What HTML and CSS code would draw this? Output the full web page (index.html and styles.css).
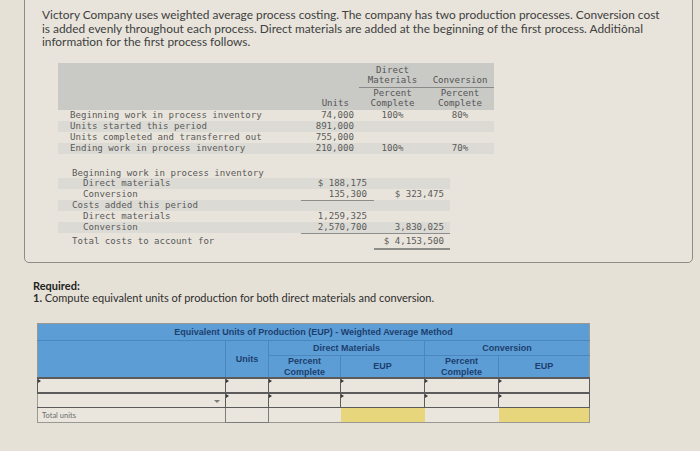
FILE: index.html
```html
<!DOCTYPE html>
<html>
<head>
<meta charset="utf-8">
<link rel="stylesheet" href="styles.css">
</head>
<body>
<div class="panel">
  <p class="intro">Victory Company uses weighted average process costing. The company has two production processes. Conversion cost<br>is added evenly throughout each process. Direct materials are added at the beginning of the first process. Additiônal<br>information for the first process follows.</p>

  <table class="mono units">
    <colgroup><col class="c-label"><col class="c-units"><col class="c-dm"><col class="c-cv"></colgroup>
    <thead>
      <tr class="h1"><th></th><th></th><th class="rule">Direct<br>Materials</th><th class="rule bottom">Conversion</th></tr>
      <tr class="h2"><th></th><th class="right">Units</th><th>Percent<br>Complete</th><th>Percent<br>Complete</th></tr>
    </thead>
    <tbody>
      <tr><td class="label">Beginning work in process inventory</td><td class="right">74,000</td><td class="center">100%</td><td class="center">80%</td></tr>
      <tr class="shade"><td class="label">Units started this period</td><td class="right">891,000</td><td></td><td></td></tr>
      <tr><td class="label">Units completed and transferred out</td><td class="right">755,000</td><td></td><td></td></tr>
      <tr class="shade"><td class="label">Ending work in process inventory</td><td class="right">210,000</td><td class="center">100%</td><td class="center">70%</td></tr>
    </tbody>
  </table>

  <table class="mono costs">
    <colgroup><col class="k-label"><col class="k-a"><col class="k-b"></colgroup>
    <tbody>
      <tr><td class="l1">Beginning work in process inventory</td><td></td><td></td></tr>
      <tr class="shade"><td class="l2">Direct materials</td><td class="va">$ 188,175</td><td></td></tr>
      <tr><td class="l2">Conversion</td><td class="va under">135,300</td><td class="vb">$ 323,475</td></tr>
      <tr class="shade"><td class="l1">Costs added this period</td><td></td><td></td></tr>
      <tr><td class="l2">Direct materials</td><td class="va">1,259,325</td><td></td></tr>
      <tr class="shade"><td class="l2">Conversion</td><td class="va under">2,570,700</td><td class="vb under">3,830,025</td></tr>
      <tr class="total"><td class="l1">Total costs to account for</td><td></td><td class="vb under2">$ 4,153,500</td></tr>
    </tbody>
  </table>
</div>

<div class="required">
  <p class="req-title">Required:</p>
  <p class="req-text"><b>1.</b> Compute equivalent units of production for both direct materials and conversion.</p>
</div>

<table class="eup">
  <colgroup><col class="e1"><col class="e2"><col class="e3"><col class="e4"><col class="e5"><col class="e6"></colgroup>
  <thead>
    <tr class="t-title"><th colspan="6">Equivalent Units of Production (EUP) - Weighted Average Method</th></tr>
    <tr class="t-group"><th rowspan="2"></th><th rowspan="2" class="vline">Units</th><th colspan="2" class="vline">Direct Materials</th><th colspan="2" class="vline">Conversion</th></tr>
    <tr class="t-sub"><th class="vline">Percent<br>Complete</th><th class="vline">EUP</th><th class="vline">Percent<br>Complete</th><th class="vline">EUP</th></tr>
  </thead>
  <tbody>
    <tr class="inrow"><td class="in mark"></td><td class="in mark"></td><td class="in mark"></td><td class="in mark"></td><td class="in mark"></td><td class="in mark"></td></tr>
    <tr class="inrow"><td class="in select"><span class="caret"></span></td><td class="in mark"></td><td class="in mark"></td><td class="in mark"></td><td class="in mark"></td><td class="in mark"></td></tr>
    <tr class="totrow"><td class="tot-label">Total units</td><td class="boxed"></td><td></td><td class="yellow"></td><td></td><td class="yellow"></td></tr>
  </tbody>
</table>
</body>
</html>
```

FILE: styles.css
```css
html, body {
  margin: 0;
  padding: 0;
}
body {
  background: #e6e1d7;
  width: 700px;
  height: 451px;
  overflow: hidden;
  font-family: Lato, "Liberation Sans", sans-serif;
  color: #3b3b3b;
}
.panel {
  margin: -10px 7px 0 24px;
  height: 273px;
  box-sizing: border-box;
  border: 1px solid #8f8b84;
  border-radius: 5px;
  background: #e8e4db;
  padding: 17px 0 0 17px;
}
.intro {
  margin: 0;
  font-size: 11.9px;
  line-height: 13.5px;
  color: #404040;
  white-space: nowrap;
}
.mono {
  font-family: "DejaVu Sans Mono", "Liberation Mono", monospace;
  font-size: 9.1px;
  color: #5a5a5a;
  border-collapse: collapse;
  table-layout: fixed;
}
.mono td, .mono th {
  padding: 0;
  font-weight: normal;
  white-space: nowrap;
}
.units {
  margin: 14px 0 0 16px;
  width: 436px;
}
.c-label { width: 243px; }
.c-units { width: 58px; }
.c-dm { width: 67px; }
.c-cv { width: 68px; }
.units thead { background: #c9c9c6; }
.units thead th { color: #555; line-height: 10.5px; text-align: center; vertical-align: bottom; }
.units .h1 th { height: 23px; }
.units .h1 th.rule { border-bottom: 1px solid #8a8a88; padding-bottom: 1px; }
.units .h2 th { height: 21px; padding-bottom: 1px; }
.units th.right { text-align: right; padding-right: 10px; }
.units td { height: 11px; line-height: 11px; }
.units td.label { padding-left: 12px; }
.units td.right { text-align: right; padding-right: 5px; }
.units td.center { text-align: center; }
.shade td { background: #dcdad4; }

.costs {
  margin: 14px 0 0 16px;
  width: 392px;
}
.k-label { width: 243px; }
.k-a { width: 73px; }
.k-b { width: 76px; }
.costs td { height: 10.7px; line-height: 10.7px; }
.costs td.l1 { padding-left: 14px; }
.costs td.l2 { padding-left: 25px; }
.costs td.va { text-align: right; padding-right: 7px; }
.costs td.vb { text-align: right; padding-right: 6px; }
.costs td.under { border-bottom: 1px solid #8d8d8a; }
.costs tr.total td { height: 14px; line-height: 14px; vertical-align: middle; }
.costs td.under2 { border-bottom: 2px solid #8d8d8a; }

.required {
  margin: 17px 0 0 33px;
  font-size: 11px;
  color: #2e2e2e;
}
.required p { margin: 0; line-height: 12px; }
.req-title { font-weight: bold; color: #222; }

.eup {
  margin: 19px 0 0 37px;
  width: 552px;
  border-collapse: collapse;
  table-layout: fixed;
  font-family: "Liberation Sans", Arial, sans-serif;
  font-size: 9px;
  border: 1px solid #9a9893;
}
.e1 { width: 188px; }
.e2 { width: 43px; }
.e3 { width: 72px; }
.e4 { width: 84px; }
.e5 { width: 74px; }
.e6 { width: 91px; }
.eup th {
  background: #5c9dd6;
  color: #1d3f6e;
  font-weight: bold;
  padding: 0;
  line-height: 10.5px;
  text-align: center;
}
.eup .t-title th { height: 16px; border-bottom: 1px solid #4c86be; }
.eup .t-group th { height: 14px; border-bottom: 1px solid #4c86be; }
.eup .t-group th[rowspan] { border-bottom: none; }
.eup .t-sub th { height: 21px; }
.eup th.vline { border-left: 1px solid #4c86be; }
.eup td {
  padding: 0;
  height: 13px;
  background: #eae6de;
}
.eup td.in {
  border: 1px solid #5b5b5b;
  border-width: 2px 1px 1px 1px;
  position: relative;
}
.eup td.mark::before {
  content: "";
  position: absolute;
  left: 0;
  top: 0;
  border-left: 3px solid #3c3c3c;
  border-top: 2px solid transparent;
  border-bottom: 2px solid transparent;
}
.eup td.select { border-left-color: #9a9893; }
.eup .caret {
  position: absolute;
  right: 5px;
  top: 6px;
  border-top: 3px solid #7a7a7a;
  border-left: 3px solid transparent;
  border-right: 3px solid transparent;
}
.eup .totrow td { height: 14px; border-top: 1px solid #5b5b5b; }
.eup td.tot-label {
  font-size: 7.5px;
  color: #6b6b6b;
  padding-left: 4px;
  font-family: Lato, "Liberation Sans", sans-serif;
}
.eup td.boxed { border: 1px solid #7d7d7d; }
.eup td.yellow { background: #e7d67c; }
```
